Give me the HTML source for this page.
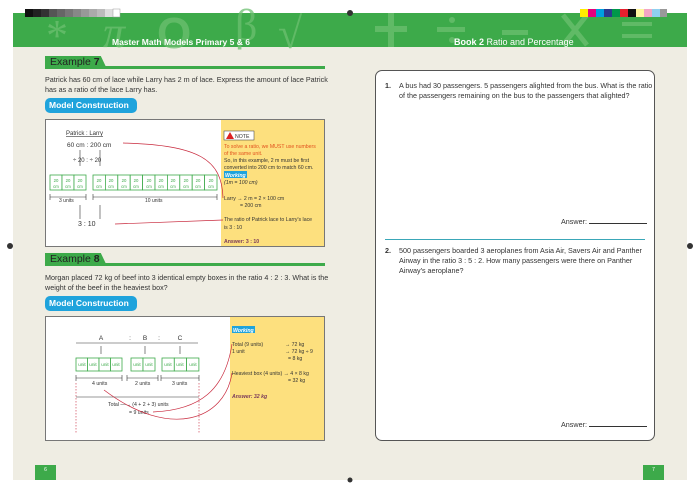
<!DOCTYPE html>
<html><head><meta charset="utf-8"><style>
*{margin:0;padding:0;box-sizing:border-box}
body{width:700px;height:493px;background:#fff;position:relative;overflow:hidden;font-family:"Liberation Sans",sans-serif;color:#333}
.a{position:absolute}
.t{font-size:7.2px;line-height:10px;color:#333}
.pill{background:#1fa3dc;color:#fff;font-weight:bold;font-size:8.5px;border-radius:5px;padding:2px 4px;height:15px;line-height:11px}
.ex{font-size:10.5px;color:#222}
</style></head><body>
<div class="a" style="left:13px;top:13px;width:674px;height:467px;background:#efede3"></div>
<div class="a" style="left:13px;top:13px;width:674px;height:34px;background:#3daa4a"></div>
<svg class="a" style="left:0;top:0" width="700" height="493">
 <g fill="#6cc070" opacity=".75" font-family="Liberation Serif" font-size="44">
  <text x="46" y="50">*</text><text x="103" y="47" font-style="italic">π</text><text x="157" y="48" font-weight="bold" font-family="Liberation Sans">O</text><text x="235" y="40">β</text><text x="278" y="48">√</text>
  <rect x="375" y="26" width="32" height="6"/><rect x="388" y="13" width="6" height="34"/>
  <rect x="437" y="27" width="28" height="5"/><circle cx="452" cy="20" r="3"/><circle cx="452" cy="40" r="3"/>
  <rect x="502" y="30" width="26" height="5"/>
  <path d="M563 15 L587 45 M587 15 L563 45" stroke="#6cc070" stroke-width="5"/>
  <rect x="622" y="22" width="30" height="4"/><rect x="622" y="34" width="30" height="4"/>
 </g>
 <g>
  <rect x="25" y="9" width="8" height="8" fill="#111"/><rect x="33" y="9" width="8" height="8" fill="#222"/><rect x="41" y="9" width="8" height="8" fill="#333"/><rect x="49" y="9" width="8" height="8" fill="#555"/><rect x="57" y="9" width="8" height="8" fill="#666"/><rect x="65" y="9" width="8" height="8" fill="#777"/><rect x="73" y="9" width="8" height="8" fill="#888"/><rect x="81" y="9" width="8" height="8" fill="#999"/><rect x="89" y="9" width="8" height="8" fill="#aaa"/><rect x="97" y="9" width="8" height="8" fill="#bbb"/><rect x="105" y="9" width="8" height="8" fill="#ddd"/><rect x="113" y="9" width="7" height="8" fill="#fff" stroke="#999" stroke-width=".5"/>
  <rect x="580" y="9" width="8" height="8" fill="#ffec00"/><rect x="588" y="9" width="8" height="8" fill="#e5007e"/><rect x="596" y="9" width="8" height="8" fill="#00a0e0"/><rect x="604" y="9" width="8" height="8" fill="#2a3a8f"/><rect x="612" y="9" width="8" height="8" fill="#00984a"/><rect x="620" y="9" width="8" height="8" fill="#e5202e"/><rect x="628" y="9" width="8" height="8" fill="#111"/><rect x="636" y="9" width="8" height="8" fill="#fff6a0"/><rect x="644" y="9" width="8" height="8" fill="#f3a5c5"/><rect x="652" y="9" width="8" height="8" fill="#8fd0f0"/><rect x="660" y="9" width="7" height="8" fill="#999"/>
  <circle cx="350" cy="13" r="3" fill="#333"/><circle cx="10" cy="246" r="3" fill="#333"/><circle cx="690" cy="246" r="3" fill="#333"/><circle cx="350" cy="480" r="2.5" fill="#333"/>
 </g>
</svg>
<div class="a" style="left:112px;top:37px;color:#fff;font-weight:bold;font-size:8.5px">Master Math Models Primary 5 &amp; 6</div>
<div class="a" style="left:454px;top:37px;color:#fff;font-size:9px"><b>Book 2</b> Ratio and Percentage</div>

<!-- Example 7 -->
<div class="a" style="left:45px;top:66px;width:280px;height:3px;background:#3daa4a"></div>
<div class="a ex" style="left:45px;top:56px;width:62px;height:13px;background:#3daa4a;clip-path:polygon(0 0,90% 0,100% 100%,0 100%);padding-left:5px;line-height:13px">Example <b>7</b></div>
<div class="a t" style="left:45px;top:75px;width:285px">Patrick has 60 cm of lace while Larry has 2 m of lace. Express the amount of lace Patrick has as a ratio of the lace Larry has.</div>
<div class="a pill" style="left:45px;top:98px;width:92px">Model Construction</div>
<div class="a" style="left:45px;top:119px;width:280px;height:128px;background:#fff;border:1px solid #777"></div>
<div class="a" style="left:221px;top:120px;width:103px;height:126px;background:#fde07e"></div>
<svg class="a" style="left:0;top:0" width="700" height="493" font-family="Liberation Sans">
 <g font-size="6" fill="#333">
  <text x="66" y="135" text-decoration="underline">Patrick : Larry</text>
  <text x="67" y="147" font-size="6.5">60 cm  :  200 cm</text>
  <text x="73" y="162">÷ 20  :  ÷ 20</text>
  <text x="59" y="202" font-size="5">3 units</text><text x="145" y="202" font-size="5">10 units</text>
  <text x="78" y="226" font-size="7">3   :   10</text>
 </g>
 <g stroke="#333" stroke-width=".6" fill="none">
  <path d="M80 150v16M100 150v16M80 205v14M100 205v14M50 197h36M93 197h124M50 194v6M86 194v6M93 194v6M217 194v6"/>
 </g>
 <g stroke="#3daa4a" stroke-width=".8" fill="#fff">
  <rect x="50" y="175" width="12" height="15"/><rect x="62" y="175" width="12" height="15"/><rect x="74" y="175" width="12" height="15"/>
  <rect x="93" y="175" width="12.4" height="15"/><rect x="105.4" y="175" width="12.4" height="15"/><rect x="117.8" y="175" width="12.4" height="15"/><rect x="130.2" y="175" width="12.4" height="15"/><rect x="142.6" y="175" width="12.4" height="15"/><rect x="155" y="175" width="12.4" height="15"/><rect x="167.4" y="175" width="12.4" height="15"/><rect x="179.8" y="175" width="12.4" height="15"/><rect x="192.2" y="175" width="12.4" height="15"/><rect x="204.6" y="175" width="12.4" height="15"/>
 </g>
 <g font-size="4.3" fill="#3daa4a" text-anchor="middle">
  <text x="56" y="182">20</text><text x="56" y="188">cm</text><text x="68" y="182">20</text><text x="68" y="188">cm</text><text x="80" y="182">20</text><text x="80" y="188">cm</text>
  <text x="99" y="182">20</text><text x="99" y="188">cm</text><text x="111" y="182">20</text><text x="111" y="188">cm</text><text x="124" y="182">20</text><text x="124" y="188">cm</text><text x="136" y="182">20</text><text x="136" y="188">cm</text><text x="149" y="182">20</text><text x="149" y="188">cm</text><text x="161" y="182">20</text><text x="161" y="188">cm</text><text x="173" y="182">20</text><text x="173" y="188">cm</text><text x="186" y="182">20</text><text x="186" y="188">cm</text><text x="198" y="182">20</text><text x="198" y="188">cm</text><text x="211" y="182">20</text><text x="211" y="188">cm</text>
 </g>
 <g stroke="#c8283c" stroke-width=".7" fill="none">
  <path d="M223 198 C222 160 200 145 123 143"/><path d="M223 220 L115 224"/>
 </g>
 <g font-size="5.2" fill="#333">
  <rect x="224" y="131" width="30" height="9" fill="#fff" stroke="#333" stroke-width=".5"/>
  <path d="M226 139l4-7 4 7z" fill="#d22"/><text x="235" y="138">NOTE</text>
  <text x="224" y="148" fill="#e2531f">To solve a ratio, we MUST use numbers</text>
  <text x="224" y="155" fill="#e2531f">of the same unit.</text>
  <text x="224" y="162">So, in this example, 2 m must be first</text>
  <text x="224" y="169">converted into 200 cm to match 60 cm.</text>
  <rect x="224" y="171" width="23" height="7" fill="#1fa3dc"/><text x="225" y="177" fill="#fff" font-weight="bold" font-style="italic">Working</text>
  <text x="224" y="184" font-style="italic">(1m = 100 cm)</text>
  <text x="224" y="200">Larry  →  2 m  =  2 × 100 cm</text><text x="240" y="207">=  200 cm</text>
  <text x="224" y="221">The ratio of Patrick lace to Larry's lace</text><text x="224" y="229">is 3 : 10</text>
  <text x="224" y="243" font-weight="bold" fill="#7a3a5a">Answer: 3 : 10</text>
 </g>
</svg>

<!-- Example 8 -->
<div class="a" style="left:45px;top:263px;width:280px;height:3px;background:#3daa4a"></div>
<div class="a ex" style="left:45px;top:253px;width:62px;height:13px;background:#3daa4a;clip-path:polygon(0 0,90% 0,100% 100%,0 100%);padding-left:5px;line-height:13px">Example <b>8</b></div>
<div class="a t" style="left:45px;top:273px;width:285px">Morgan placed 72 kg of beef into 3 identical empty boxes in the ratio 4 : 2 : 3. What is the weight of the beef in the heaviest box?</div>
<div class="a pill" style="left:45px;top:296px;width:92px">Model Construction</div>
<div class="a" style="left:45px;top:316px;width:280px;height:125px;background:#fff;border:1px solid #777"></div>
<div class="a" style="left:230px;top:317px;width:94px;height:123px;background:#fde07e"></div>
<svg class="a" style="left:0;top:0" width="700" height="493" font-family="Liberation Sans">
 <g font-size="6.5" fill="#333" text-anchor="middle">
  <text x="101" y="340">A</text><text x="130" y="340">:</text><text x="145" y="340">B</text><text x="159" y="340">:</text><text x="180" y="340">C</text>
 </g>
 <g stroke="#333" stroke-width=".6" fill="none">
  <path d="M76 343h122M101 346v8M145 346v8M180 346v8M76 378h46M127 378h31M161 378h38M76 375v6M122 375v6M127 375v6M158 375v6M161 375v6M199 375v6M76 397h123"/>
  <path d="M76 383v50M199 383v50" stroke="#c8283c" stroke-dasharray="1.5 1.5"/>
 </g>
 <g stroke="#3daa4a" stroke-width=".8" fill="#fff">
  <rect x="76" y="358" width="11.5" height="13"/><rect x="87.5" y="358" width="11.5" height="13"/><rect x="99" y="358" width="11.5" height="13"/><rect x="110.5" y="358" width="11.5" height="13"/>
  <rect x="131" y="358" width="12" height="13"/><rect x="143" y="358" width="12" height="13"/>
  <rect x="162" y="358" width="12.3" height="13"/><rect x="174.3" y="358" width="12.3" height="13"/><rect x="186.6" y="358" width="12.3" height="13"/>
 </g>
 <g font-size="4.6" fill="#3daa4a" text-anchor="middle">
  <text x="82" y="366">unit</text><text x="93" y="366">unit</text><text x="105" y="366">unit</text><text x="116" y="366">unit</text><text x="137" y="366">unit</text><text x="149" y="366">unit</text><text x="168" y="366">unit</text><text x="180" y="366">unit</text><text x="193" y="366">unit</text>
 </g>
 <g font-size="5.2" fill="#333">
  <text x="92" y="385">4 units</text><text x="135" y="385">2 units</text><text x="172" y="385">3 units</text>
  <text x="108" y="406">Total  —→  (4 + 2 + 3) units</text><text x="129" y="414">= 9 units</text>
 </g>
 <g stroke="#c8283c" stroke-width=".7" fill="none">
  <path d="M232 344 C225 390 200 410 153 412"/><path d="M232 373 C225 420 170 440 104 390"/>
 </g>
 <g font-size="5.2" fill="#333">
  <rect x="232" y="326" width="23" height="7" fill="#1fa3dc"/><text x="233" y="332" fill="#fff" font-weight="bold" font-style="italic">Working</text>
  <text x="232" y="346">Total (9 units)</text><text x="285" y="346">→  72 kg</text>
  <text x="232" y="353">1 unit</text><text x="285" y="353">→  72 kg ÷ 9</text><text x="288" y="360">=   8 kg</text>
  <text x="232" y="375">Heaviest box (4 units) →  4 × 8 kg</text><text x="288" y="382">=   32 kg</text>
  <text x="232" y="398" font-weight="bold" font-style="italic" fill="#7a3a5a">Answer: 32 kg</text>
 </g>
</svg>

<!-- Right page -->
<div class="a" style="left:375px;top:70px;width:280px;height:371px;background:#fff;border:1.2px solid #555;border-radius:7px"></div>
<div class="a t" style="left:385px;top:81px;font-weight:bold">1.</div>
<div class="a t" style="left:399px;top:81px;width:255px">A bus had 30 passengers. 5 passengers alighted from the bus. What is the ratio of the passengers remaining on the bus to the passengers that alighted?</div>
<div class="a t" style="left:561px;top:217px">Answer: <span style="display:inline-block;width:58px;border-bottom:.7px solid #333"></span></div>
<div class="a" style="left:385px;top:239px;width:260px;height:1px;background:#3aa7b8"></div>
<div class="a t" style="left:385px;top:246px;font-weight:bold">2.</div>
<div class="a t" style="left:399px;top:246px;width:250px">500 passengers boarded 3 aeroplanes from Asia Air, Savers Air and Panther Airway in the ratio 3 : 5 : 2. How many passengers were there on Panther Airway's aeroplane?</div>
<div class="a t" style="left:561px;top:420px">Answer: <span style="display:inline-block;width:58px;border-bottom:.7px solid #333"></span></div>

<div class="a" style="left:35px;top:465px;width:21px;height:15px;background:#3daa4a;color:#fff;font-size:5px;text-align:center;padding-top:2px">6</div>
<div class="a" style="left:643px;top:465px;width:21px;height:15px;background:#3daa4a;color:#fff;font-size:5px;text-align:center;padding-top:2px">7</div>
</body></html>
